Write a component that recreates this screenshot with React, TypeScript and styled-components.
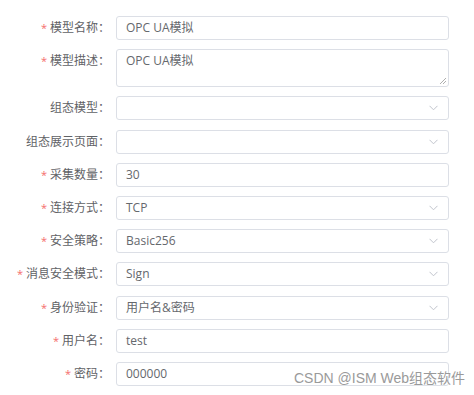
import React, { FC } from 'react';
import styled, { createGlobalStyle } from 'styled-components';

const GlobalStyle = createGlobalStyle`
    html, body {
        margin: 0;
        padding: 0;
        background: #ffffff;
    }
    body {
        font-family: "Open Sans", "Noto Sans CJK SC", sans-serif;
    }
`

const Root = styled.div`
    position: relative;
    width: 474px;
    height: 395px;
    overflow: hidden;
    padding-top: 16px;
    box-sizing: border-box;
`

const Form = styled.div`
    display: flex;
    flex-direction: column;
    gap: 9.2px;
`

const Row = styled.div`
    display: flex;
    align-items: flex-start;
`

const Label = styled.div`
    width: 116px;
    padding-right: 6px;
    box-sizing: border-box;
    height: 24px;
    line-height: 24px;
    text-align: right;
    font-size: 12px;
    color: #5f6266;
    white-space: nowrap;
`

const Star = styled.span`
    color: #f56c6c;
    margin-right: 3px;
    font-size: 11px;
`

const Box = styled.div<{ height?: number }>`
    position: relative;
    width: 333px;
    height: ${(p) => p.height ?? 24}px;
    box-sizing: border-box;
    border: 1px solid #dcdfe6;
    border-radius: 3px;
    padding: ${(p) => (p.height ? '3px 9px' : '0 9px')};
    line-height: ${(p) => (p.height ? '16px' : '22px')};
    font-size: 12px;
    color: #65686d;
    background: #fff;
`

const Chevron = styled.svg`
    position: absolute;
    right: 10px;
    top: 8px;
`

const Grip = styled.svg`
    position: absolute;
    right: 1px;
    bottom: 1px;
`

const Watermark = styled.div`
    position: absolute;
    left: 294px;
    top: 367px;
    font-family: "Liberation Sans", "Noto Sans CJK SC", sans-serif;
    font-size: 14px;
    color: #9a9a9a;
    text-shadow: 0 0 2px #fff;
`

interface Field {
    label: string;
    required?: boolean;
    value?: string;
    kind: 'input' | 'textarea' | 'select';
}

const fields: Field[] = [
    { label: '模型名称', required: true, value: 'OPC UA模拟', kind: 'input' },
    { label: '模型描述', required: true, value: 'OPC UA模拟', kind: 'textarea' },
    { label: '组态模型', kind: 'select' },
    { label: '组态展示页面', kind: 'select' },
    { label: '采集数量', required: true, value: '30', kind: 'input' },
    { label: '连接方式', required: true, value: 'TCP', kind: 'select' },
    { label: '安全策略', required: true, value: 'Basic256', kind: 'select' },
    { label: '消息安全模式', required: true, value: 'Sign', kind: 'select' },
    { label: '身份验证', required: true, value: '用户名&密码', kind: 'select' },
    { label: '用户名', required: true, value: 'test', kind: 'input' },
    { label: '密码', required: true, value: '000000', kind: 'input' },
];

const FieldRow: FC<{ field: Field }> = ({ field }) => (
    <Row>
        <Label>
            {field.required && <Star>*</Star>}
            {field.label}：
        </Label>
        <Box height={field.kind === 'textarea' ? 38 : undefined}>
            {field.value}
            {field.kind === 'select' && (
                <Chevron width="9" height="6" viewBox="0 0 9 6">
                    <path d="M0.5 0.8 L4.5 4.8 L8.5 0.8" fill="none" stroke="#c0c4cc" strokeWidth="1" />
                </Chevron>
            )}
            {field.kind === 'textarea' && (
                <Grip width="8" height="8" viewBox="0 0 8 8">
                    <path d="M7 1 L1 7 M7 4 L4 7" stroke="#9a9a9a" strokeWidth="0.8" />
                </Grip>
            )}
        </Box>
    </Row>
);

const App: FC = () => (
    <Root>
        <GlobalStyle />
        <Form>
            {fields.map((f) => (
                <FieldRow key={f.label} field={f} />
            ))}
        </Form>
        <Watermark>CSDN @ISM Web组态软件</Watermark>
    </Root>
);

export default App;
